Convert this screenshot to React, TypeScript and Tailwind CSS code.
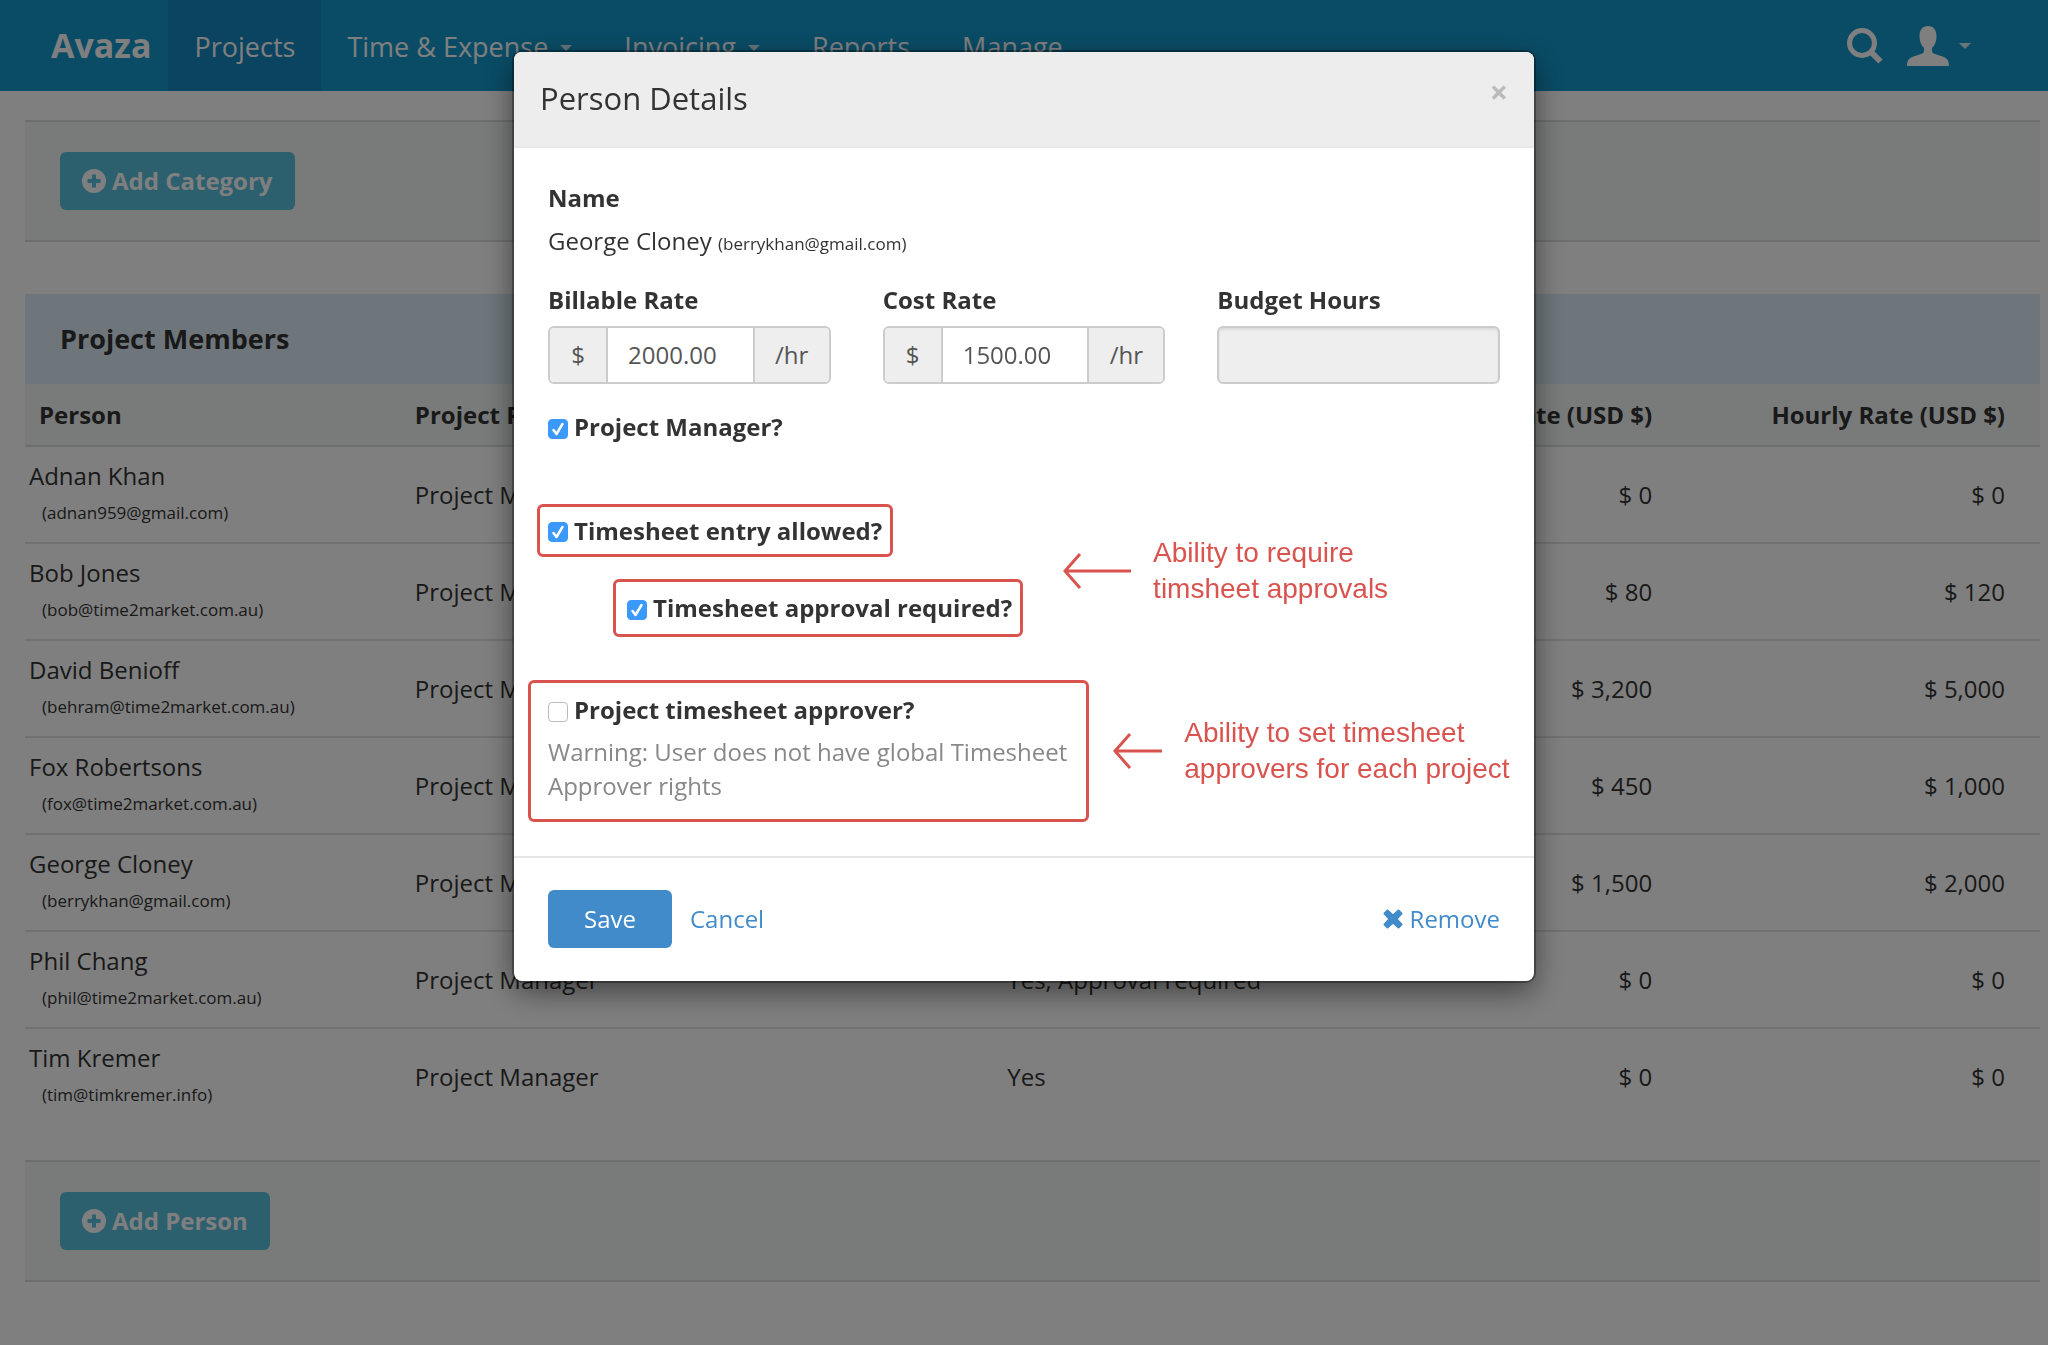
import type { ReactNode } from "react";

interface Member {
  name: string;
  email: string;
  timesheet: string;
  cost: string;
  hourly: string;
}

const members: Member[] = [
  { name: "Adnan Khan", email: "adnan959@gmail.com", timesheet: "Yes", cost: "$ 0", hourly: "$ 0" },
  { name: "Bob Jones", email: "bob@time2market.com.au", timesheet: "Yes", cost: "$ 80", hourly: "$ 120" },
  { name: "David Benioff", email: "behram@time2market.com.au", timesheet: "Yes", cost: "$ 3,200", hourly: "$ 5,000" },
  { name: "Fox Robertsons", email: "fox@time2market.com.au", timesheet: "Yes", cost: "$ 450", hourly: "$ 1,000" },
  { name: "George Cloney", email: "berrykhan@gmail.com", timesheet: "Yes", cost: "$ 1,500", hourly: "$ 2,000" },
  { name: "Phil Chang", email: "phil@time2market.com.au", timesheet: "Yes, Approval required", cost: "$ 0", hourly: "$ 0" },
  { name: "Tim Kremer", email: "tim@timkremer.info", timesheet: "Yes", cost: "$ 0", hourly: "$ 0" },
];

function Caret() {
  return (
    <svg viewBox="0 0 12 6" className="h-1.5 w-3 opacity-80" fill="currentColor" aria-hidden="true">
      <path d="M0 0h12L6 6z" />
    </svg>
  );
}

function PlusSign() {
  return (
    <svg viewBox="0 0 24 24" className="size-6" aria-hidden="true">
      <path
        fill="currentColor"
        fillRule="evenodd"
        d="M12 0a12 12 0 1 1 0 24 12 12 0 0 1 0-24zM10 5.5V10H5.5v4H10v4.5h4V14h4.5v-4H14V5.5z"
      />
    </svg>
  );
}

interface NavItemProps {
  label: string;
  active?: boolean;
  caret?: boolean;
}

function NavItem({ label, active, caret }: NavItemProps) {
  return (
    <a
      href="#"
      className={`flex items-center gap-3 px-[26px] pt-1 ${active ? "bg-[#1688c0]" : ""}`}
    >
      {label}
      {caret && <Caret />}
    </a>
  );
}

function Navbar() {
  return (
    <header className="flex h-[91px] items-stretch bg-[#1498cc] text-[27px] text-white">
      <a href="#" className="flex items-center pr-[17px] pl-[51px] text-[34px] font-bold">
        Avaza
      </a>
      <nav className="flex items-stretch">
        <NavItem label="Projects" active />
        <NavItem label="Time &amp; Expense" caret />
        <NavItem label="Invoicing" caret />
        <NavItem label="Reports" />
        <NavItem label="Manage" />
      </nav>
      <div className="ml-auto flex items-center gap-6 pr-[77px]">
        <button type="button" aria-label="Search">
          <svg viewBox="0 0 36 36" className="size-9" fill="none" stroke="currentColor" aria-hidden="true">
            <circle cx="15" cy="15" r="12.5" strokeWidth="5" />
            <path d="M24 24l9.5 9.5" strokeWidth="6" />
          </svg>
        </button>
        <button type="button" aria-label="Account" className="flex items-center gap-2.5">
          <svg viewBox="0 0 42 40" className="h-10 w-[42px]" fill="currentColor" aria-hidden="true">
            <path d="M21 0c5.500 0 8.500 4 8.500 10 0 5-1.500 9.500-4.500 12v2.500c0 1.800 1 2.800 3 3.500l7.500 2.600C40 32.200 42 34.500 42 40H0c0-5.500 2-7.800 6.500-9.400L14 28c2-.7 3-1.700 3-3.500V22c-3-2.500-4.500-7-4.500-12 0-6 3-10 8.500-10z" />
          </svg>
          <Caret />
        </button>
      </div>
    </header>
  );
}

function ActionBar({ label }: { label: string }) {
  return (
    <div className="border-y-2 border-[#d8dedd] bg-[#f0f6f5] px-[35px] py-[30px]">
      <button
        type="button"
        className="flex h-[58px] items-center gap-1.5 rounded-md bg-[#5bc0de] px-[22px] font-bold text-white"
      >
        <PlusSign />
        {label}
      </button>
    </div>
  );
}

function MembersTable() {
  return (
    <section className="mt-[52px]">
      <h2 className="bg-[#dcecf6] px-[35px] py-6 text-[27px] leading-[42px] font-bold">
        Project Members
      </h2>
      <table className="w-full table-fixed">
        <thead className="border-b-2 border-[#d8dedd] bg-[#f0f6f5]">
          <tr className="h-[62px] text-left">
            <th className="w-[19%] pl-[14px]">Person</th>
            <th className="w-[29.4%] pl-[7px]">Project Role</th>
            <th className="pl-[7px]">Timesheets</th>
            <th className="w-[17%] pr-[5px] text-right">Cost Rate (USD $)</th>
            <th className="w-[19%] pr-[35px] text-right">Hourly Rate (USD $)</th>
          </tr>
        </thead>
        <tbody>
          {members.map((m) => (
            <tr key={m.email} className="h-[97px] border-b-2 border-[#e2e2e2] last:border-b-0">
              <td className="pl-1">
                <div className="leading-9">{m.name}</div>
                <div className="pl-[13px] text-[17px] leading-[38px]">({m.email})</div>
              </td>
              <td className="pl-[7px]">Project Manager</td>
              <td className="pl-[7px]">{m.timesheet}</td>
              <td className="pr-[5px] text-right">{m.cost}</td>
              <td className="pr-[35px] text-right">{m.hourly}</td>
            </tr>
          ))}
        </tbody>
      </table>
    </section>
  );
}

interface RateFieldProps {
  id: string;
  label: string;
  value: string;
}

function RateField({ id, label, value }: RateFieldProps) {
  return (
    <div>
      <label htmlFor={id} className="block font-bold">
        {label}
      </label>
      <div className="mt-[9px] flex h-[58px] overflow-hidden rounded-md border-2 border-[#ccc] text-[#555]">
        <span className="flex w-14 items-center justify-center bg-[#eee]">$</span>
        <input
          id={id}
          type="text"
          defaultValue={value}
          className="min-w-0 flex-1 border-x-2 border-[#ccc] bg-white px-5"
        />
        <span className="flex w-[74px] items-center justify-center bg-[#eee]">/hr</span>
      </div>
    </div>
  );
}

interface CheckFieldProps {
  label: string;
  checked?: boolean;
}

function CheckField({ label, checked }: CheckFieldProps) {
  return (
    <label className="flex items-center gap-1.5 font-bold">
      <span className="relative mt-[3px] block size-5">
        <input
          type="checkbox"
          defaultChecked={checked}
          className="peer block size-5 appearance-none rounded border border-[#bbb] bg-white checked:border-[#3b99fc] checked:bg-[#3b99fc]"
        />
        <svg
          viewBox="0 0 20 20"
          className="pointer-events-none absolute inset-0 hidden size-5 peer-checked:block"
          fill="none"
          stroke="white"
          strokeWidth="2.5"
          strokeLinecap="round"
          strokeLinejoin="round"
          aria-hidden="true"
        >
          <path d="M5.5 11l3 4L14.5 5" />
        </svg>
      </span>
      {label}
    </label>
  );
}

function Callout({ arrowWidth, children }: { arrowWidth: number; children: ReactNode }) {
  return (
    <div className="flex items-center gap-[22px] font-['Liberation_Sans',Arial,sans-serif] text-[28px] leading-9 whitespace-nowrap text-[#d9534f]">
      <svg
        width={arrowWidth}
        height="36"
        viewBox={`0 0 ${arrowWidth} 36`}
        fill="none"
        stroke="currentColor"
        strokeWidth="3"
        aria-hidden="true"
      >
        <path d={`M17 1L2 18l15 17M2 18H${arrowWidth}`} />
      </svg>
      <p>{children}</p>
    </div>
  );
}

function PersonDialog() {
  return (
    <div className="fixed inset-0 flex items-start justify-center overflow-auto bg-black/50 pt-[52px]">
      <div
        role="dialog"
        aria-labelledby="dialog-title"
        className="w-[1020px] overflow-hidden rounded-lg bg-white leading-[34px] shadow-[0_0_0_2px_rgba(0,0,0,0.3),0_10px_30px_rgba(0,0,0,0.5)]"
      >
        <div className="flex items-start justify-between border-b-2 border-[#e8e8e8] bg-[#ededed] px-[26px] pt-[25px] pb-[27px]">
          <h1 id="dialog-title" className="text-[31px] leading-[42px]">
            Person Details
          </h1>
          <button type="button" aria-label="Close" className="text-[32px] leading-[30px] font-bold text-[#bbb]">
            ×
          </button>
        </div>

        <form>
          <div className="px-[34px] pt-[33px] pb-[34px]">
            <div className="font-bold">Name</div>
            <p className="mt-[9px]">
              George Cloney <span className="text-[17px] leading-none">(berrykhan@gmail.com)</span>
            </p>

            <div className="mt-[25px] grid grid-cols-3 gap-[52px]">
              <RateField id="billable" label="Billable Rate" value="2000.00" />
              <RateField id="cost" label="Cost Rate" value="1500.00" />
              <div>
                <label htmlFor="budget" className="block font-bold">
                  Budget Hours
                </label>
                <input
                  id="budget"
                  type="text"
                  disabled
                  className="mt-[9px] block h-[58px] w-full rounded-md border-2 border-[#ccc] bg-[#eee] px-5 shadow-[inset_0_2px_2px_rgba(0,0,0,0.08)]"
                />
              </div>
            </div>

            <div className="mt-[26px]">
              <CheckField label="Project Manager?" checked />
            </div>

            <div className="mt-[60px] -ml-[11px] flex items-center gap-10">
              <div className="flex flex-col items-start gap-[22px]">
                <div className="flex h-[53px] items-center rounded-md border-3 border-[#d9534f] px-2">
                  <CheckField label="Timesheet entry allowed?" checked />
                </div>
                <div className="ml-[76px] flex h-[58px] items-center rounded-md border-3 border-[#d9534f] pr-2 pl-[11px]">
                  <CheckField label="Timesheet approval required?" checked />
                </div>
              </div>
              <Callout arrowWidth={68}>
                Ability to require
                <br />
                timsheet approvals
              </Callout>
            </div>

            <div className="mt-[43px] -mr-[34px] -ml-5 flex items-center gap-6">
              <div className="rounded-md border-3 border-[#d9534f] pt-2.5 pr-[19px] pb-4 pl-[17px]">
                <CheckField label="Project timesheet approver?" />
                <p className="mt-2 whitespace-nowrap text-[#888]">
                  Warning: User does not have global Timesheet
                  <br />
                  Approver rights
                </p>
              </div>
              <Callout arrowWidth={49}>
                Ability to set timesheet
                <br />
                approvers for each project
              </Callout>
            </div>
          </div>

          <div className="flex items-center border-t-2 border-[#e5e5e5] px-[34px] pt-8 pb-[33px] text-[#428bca]">
            <button type="submit" className="h-[58px] rounded-md bg-[#428bca] px-9 text-white">
              Save
            </button>
            <a href="#" className="ml-[18px]">
              Cancel
            </a>
            <a href="#" className="ml-auto flex items-center gap-[7px]">
              <svg viewBox="0 0 20 20" className="size-5" aria-hidden="true">
                <path
                  fill="currentColor"
                  stroke="currentColor"
                  strokeWidth="2"
                  strokeLinejoin="round"
                  d="M4.500 1.500L10 6.500l5.500-5 3 3-5 5.500 5 5.500-3 3-5.500-5-5.500 5-3-3 5-5.500-5-5.500z"
                />
              </svg>
              Remove
            </a>
          </div>
        </form>
      </div>
    </div>
  );
}

export default function App() {
  return (
    <div className="min-h-screen bg-white font-['Open_Sans','Noto_Sans',sans-serif] text-[24px] text-[#333]">
      <Navbar />
      <main className="pt-[29px] pr-2 pb-[61px] pl-[25px]">
        <ActionBar label="Add Category" />
        <MembersTable />
        <div className="mt-[35px]">
          <ActionBar label="Add Person" />
        </div>
      </main>
      <PersonDialog />
    </div>
  );
}
